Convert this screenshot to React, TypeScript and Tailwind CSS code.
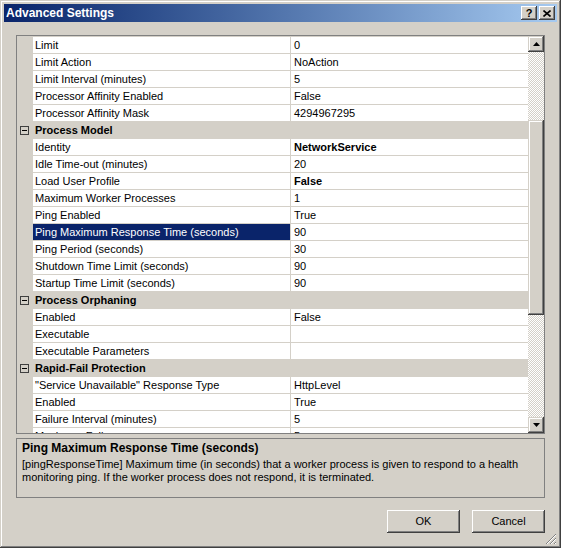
import React from "react";

type Row = {
  name: string;
  value?: string;
  bold?: boolean;
  group?: boolean;
  selected?: boolean;
};

const rows: Row[] = [
  { name: "Limit", value: "0" },
  { name: "Limit Action", value: "NoAction" },
  { name: "Limit Interval (minutes)", value: "5" },
  { name: "Processor Affinity Enabled", value: "False" },
  { name: "Processor Affinity Mask", value: "4294967295" },
  { name: "Process Model", group: true },
  { name: "Identity", value: "NetworkService", bold: true },
  { name: "Idle Time-out (minutes)", value: "20" },
  { name: "Load User Profile", value: "False", bold: true },
  { name: "Maximum Worker Processes", value: "1" },
  { name: "Ping Enabled", value: "True" },
  { name: "Ping Maximum Response Time (seconds)", value: "90", selected: true },
  { name: "Ping Period (seconds)", value: "30" },
  { name: "Shutdown Time Limit (seconds)", value: "90" },
  { name: "Startup Time Limit (seconds)", value: "90" },
  { name: "Process Orphaning", group: true },
  { name: "Enabled", value: "False" },
  { name: "Executable", value: "" },
  { name: "Executable Parameters", value: "" },
  { name: "Rapid-Fail Protection", group: true },
  { name: "\"Service Unavailable\" Response Type", value: "HttpLevel" },
  { name: "Enabled", value: "True" },
  { name: "Failure Interval (minutes)", value: "5" },
  { name: "Maximum Failures", value: "5" },
];

const raised =
  "shadow-[inset_-1px_-1px_#404040,inset_1px_1px_#d4d0c8,inset_-2px_-2px_#808080,inset_2px_2px_#ffffff]";
const button =
  "shadow-[inset_-1px_-1px_#404040,inset_1px_1px_#ffffff,inset_-2px_-2px_#808080,inset_2px_2px_#d4d0c8]";

const GridRow: React.FC<{ row: Row }> = ({ row }) => {
  if (row.group) {
    return (
      <div className="flex h-4 shrink-0 items-center">
        <div className="flex w-[15px] justify-center">
          <div className="flex h-[9px] w-[9px] items-center justify-center border border-[#404040] bg-[#d4d0c8]">
            <div className="h-px w-[5px] bg-black" />
          </div>
        </div>
        <div className="pl-[3px] font-bold">{row.name}</div>
      </div>
    );
  }
  return (
    <div className="flex h-4 shrink-0 gap-px">
      <div className="w-[15px] shrink-0" />
      <div
        className={
          "w-[257px] shrink-0 truncate pl-[2px] leading-4 " +
          (row.selected ? "bg-[#0a246a] text-white" : "bg-white")
        }
      >
        {row.name}
      </div>
      <div className={"flex-1 bg-white pl-[3px] leading-4 " + (row.bold ? "font-bold" : "")}>{row.value}</div>
    </div>
  );
};

const Arrow: React.FC<{ down?: boolean }> = ({ down }) => (
  <svg width="7" height="4" viewBox="0 0 7 4" className={down ? "rotate-180" : ""}>
    <path d="M3.5 0 L7 4 L0 4 Z" fill="#000" />
  </svg>
);

export default function App() {
  return (
    <div
      className={
        "flex h-[548px] w-[561px] flex-col bg-[#d4d0c8] p-1 text-[11px] text-black font-['Liberation_Sans',Arial,sans-serif] " +
        raised
      }
    >
      {/* title bar */}
      <div className="flex h-[18px] shrink-0 items-center bg-linear-to-r from-[#0a246a] to-[#a6caf0] pl-[2px] pr-[2px]">
        <div className="flex-1 text-[12px] font-bold text-white">Advanced Settings</div>
        <div className="flex gap-[2px]">
          <div className={"flex h-[14px] w-4 items-center justify-center bg-[#d4d0c8] text-[11px] font-bold " + button}>
            ?
          </div>
          <div className={"flex h-[14px] w-4 items-center justify-center bg-[#d4d0c8] " + button}>
            <svg width="8" height="7" viewBox="0 0 8 7">
              <path d="M0.5 0.5 L7.5 6.5 M7.5 0.5 L0.5 6.5" stroke="#000" strokeWidth="1.6" />
            </svg>
          </div>
        </div>
      </div>

      {/* property grid */}
      <div className="ml-3 mr-3 mt-[13px] flex h-[399px] shrink-0 border border-[#808080] bg-[#d4d0c8]">
        <div className="flex flex-1 flex-col gap-px overflow-hidden pt-px">
          {rows.map((r, i) => (
            <GridRow key={i} row={r} />
          ))}
        </div>
        <div className="flex w-4 flex-col">
          <div className={"flex h-4 items-center justify-center bg-[#d4d0c8] " + raised}>
            <Arrow />
          </div>
          <div className="flex flex-1 flex-col bg-[repeating-conic-gradient(#d4d0c8_0%_25%,#ffffff_0%_50%)] bg-[length:2px_2px]">
            <div className="h-[68px]" />
            <div className={"h-[195px] bg-[#d4d0c8] " + raised} />
          </div>
          <div className={"flex h-4 items-center justify-center bg-[#d4d0c8] " + raised}>
            <Arrow down />
          </div>
        </div>
      </div>

      {/* description */}
      <div className="ml-3 mr-3 mt-1 h-[60px] shrink-0 border border-[#808080] px-[5px] pt-[3px] leading-[13px]">
        <div className="mb-[3px] text-[12px] font-bold">Ping Maximum Response Time (seconds)</div>
        <div>
          [pingResponseTime] Maximum time (in seconds) that a worker process is given to respond to a health
          <br />
          monitoring ping. If the worker process does not respond, it is terminated.
        </div>
      </div>

      {/* buttons */}
      <div className="mr-3 mt-3 flex justify-end gap-3">
        <div className={"flex h-[23px] w-[73px] items-center justify-center bg-[#d4d0c8] " + button}>OK</div>
        <div className={"flex h-[23px] w-[73px] items-center justify-center bg-[#d4d0c8] " + button}>Cancel</div>
      </div>

      <div className="flex flex-1 items-end justify-end">
        <svg width="12" height="12" viewBox="0 0 12 12">
          <path d="M11 1 L1 11 M11 5 L5 11 M11 9 L9 11" stroke="#808080" strokeWidth="1" />
          <path d="M11 2 L2 11 M11 6 L6 11 M11 10 L10 11" stroke="#ffffff" strokeWidth="1" />
        </svg>
      </div>
    </div>
  );
}
